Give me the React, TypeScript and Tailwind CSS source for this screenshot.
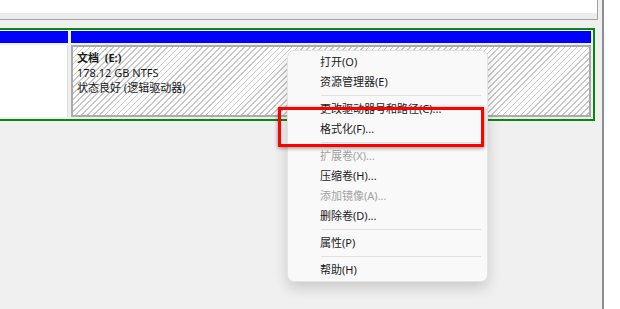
const menuItems: ({ label: string; disabled?: boolean } | "sep")[] = [
  { label: "打开(O)" },
  { label: "资源管理器(E)" },
  "sep",
  { label: "更改驱动器号和路径(C)..." },
  { label: "格式化(F)..." },
  "sep",
  { label: "扩展卷(X)...", disabled: true },
  { label: "压缩卷(H)..." },
  { label: "添加镜像(A)...", disabled: true },
  { label: "删除卷(D)..." },
  "sep",
  { label: "属性(P)" },
  "sep",
  { label: "帮助(H)" },
];

function ContextMenu() {
  return (
    <div className="absolute left-[287px] top-[50px] w-[201px] rounded-[7px] bg-[#f9f9f9] border border-[#e4e4e4] shadow-[0_6px_14px_rgba(0,0,0,0.16)] pt-[1px] pb-[1px]">
      {menuItems.map((item, i) =>
        item === "sep" ? (
          <div key={i} className="h-[7px] flex items-center pl-[33px] pr-[6px]">
            <div className="h-px w-full bg-[#e1e1e1]" />
          </div>
        ) : (
          <div
            key={i}
            className={`h-[20px] flex items-center pl-[32px] text-[11px] ${item.disabled ? "text-[#a2a2a2]" : "text-[#1b1b1b]"}`}
          >
            {item.label}
          </div>
        )
      )}
    </div>
  );
}

export default function App() {
  return (
    <div className="relative w-[620px] h-[309px] flex bg-white overflow-hidden font-['Noto_Sans','Noto_Sans_CJK_SC',sans-serif]">
      {/* Disk view area */}
      <div className="w-[602px] h-full bg-[#f0f0f0] flex flex-col">
        <div className="h-[20px] flex">
          <div className="w-[597px] flex flex-col">
            <div className="h-[13px] bg-white" />
            <div className="h-[6px] bg-[#ececec]" />
            <div className="h-px bg-[#a3a3a3]" />
          </div>
          <div className="w-px bg-[#a3a3a3]" />
        </div>
        <div className="h-[8px]" />

        {/* Extended partition frame */}
        <div className="w-[595px] border-y-2 border-r-2 border-[#0a8a0a] flex flex-col pt-px pb-[2px] pr-[2px]">
          <div className="h-[12px] flex gap-[3px]">
            <div className="w-[68px] bg-[#0000ff]" />
            <div className="flex-1 bg-[#0000ff]" />
          </div>
          <div className="h-[2px]" />
          <div className="h-[72px] flex gap-[3px]">
            <div className="w-[68px] bg-white border-r border-[#dcdcdc]" />
            <div className="flex-1 border-2 border-[#ababab] bg-[repeating-linear-gradient(135deg,#ffffff_0px,#ffffff_3px,#c9c9c9_3px,#c9c9c9_4.2px)] pl-[4px] pt-[3px] text-[11px] leading-[15px] text-[#1a1a1a]">
              <div className="font-bold">文档 &nbsp;(E:)</div>
              <div>178.12 GB NTFS</div>
              <div>状态良好 (逻辑驱动器)</div>
            </div>
          </div>
        </div>
      </div>
      <div className="w-[2px] bg-[#8f8f8f]" />
      <div className="flex-1 bg-white" />

      <ContextMenu />

      {/* Highlight box */}
      <div className="absolute left-[278px] top-[107px] w-[206px] h-[40px] border-[3px] border-[#ff0000] shadow-[0_1px_4px_rgba(0,0,0,0.45)]" />
    </div>
  );
}
